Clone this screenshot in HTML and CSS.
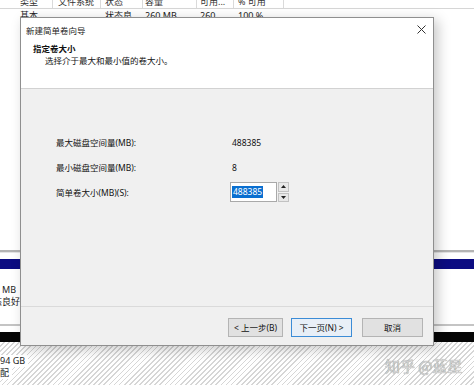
FILE: index.html
```html
<!DOCTYPE html>
<html>
<head>
<meta charset="utf-8">
<link rel="stylesheet" href="styles.css">
</head>
<body>
<div class="screen">
  <div class="thead">
    <div class="th c1"><span>类型</span></div>
    <div class="th c2"><span>文件系统</span></div>
    <div class="th c3"><span>状态</span></div>
    <div class="th c4"><span>容量</span></div>
    <div class="th c5"><span>可用...</span></div>
    <div class="th c6"><span>% 可用</span></div>
  </div>
  <div class="trow">
    <div class="td c1">基本</div>
    <div class="td c2"></div>
    <div class="td c3">状态良...</div>
    <div class="td c4">260 MB</div>
    <div class="td c5">260 ...</div>
    <div class="td c6">100 %</div>
  </div>
  <div class="filler"></div>
  <div class="disk">
    <div class="disk-line"></div>
    <div class="disk-gap"></div>
    <div class="disk-bar"></div>
    <div class="disk-info">
      <div class="info-line">MB</div>
      <div class="info-clip"><div class="info-line cut">态良好</div></div>
    </div>
    <div class="disk-line2"></div>
    <div class="disk-gap2"></div>
    <div class="disk-black"></div>
  </div>
  <div class="hatch">
    <div class="hlabel">94 GB</div>
    <div class="hlabel">配</div>
  </div>

  <div class="watermark">知乎 @蓝星</div>

  <div class="dialog">
    <div class="titlebar">
      <span class="title">新建简单卷向导</span>
      <svg class="close" width="9" height="9" viewBox="0 0 9 9"><path d="M0.5 0.5 L8.5 8.5 M8.5 0.5 L0.5 8.5" stroke="#333" stroke-width="1" fill="none"/></svg>
    </div>
    <div class="header">
      <div class="h-title">指定卷大小</div>
      <div class="h-sub">选择介于最大和最小值的卷大小。</div>
    </div>
    <div class="body">
      <div class="row">
        <div class="label">最大磁盘空间量(MB):</div>
        <div class="value">488385</div>
      </div>
      <div class="row">
        <div class="label">最小磁盘空间量(MB):</div>
        <div class="value">8</div>
      </div>
      <div class="row">
        <div class="label">简单卷大小(MB)(S):</div>
        <div class="spin">
          <div class="input"><span class="sel">488385</span></div>
          <div class="arrows">
            <div class="arrow"><svg width="5" height="3" viewBox="0 0 5 3"><path d="M0 3 L2.5 0 L5 3 Z" fill="#222"/></svg></div>
            <div class="arrow"><svg width="5" height="3" viewBox="0 0 5 3"><path d="M0 0 L2.5 3 L5 0 Z" fill="#222"/></svg></div>
          </div>
        </div>
      </div>
    </div>
    <div class="footer">
      <button class="btn back">&lt; 上一步(B)</button>
      <button class="btn next">下一页(N) &gt;</button>
      <button class="btn cancel">取消</button>
    </div>
  </div>
</div>
</body>
</html>
```

FILE: styles.css
```css
html, body {
  margin: 0;
  padding: 0;
}
body {
  width: 474px;
  height: 385px;
  overflow: hidden;
  background: #fff;
  font-family: "Noto Sans", "Noto Sans CJK SC", sans-serif;
  color: #000;
}
.screen {
  position: relative;
  width: 474px;
  height: 385px;
  display: flex;
  flex-direction: column;
  overflow: hidden;
  font-size: 9px;
}

/* table header */
.thead {
  display: flex;
  height: 8px;
  border-bottom: 1px solid #d6d6d6;
  overflow: hidden;
  background: #fff;
}
.th {
  box-sizing: border-box;
  border-right: 1px solid #dadada;
  height: 8px;
  overflow: hidden;
  color: #333;
}
.th span {
  display: block;
  line-height: 12px;
  margin-top: -4px;
  white-space: nowrap;
}
.c1 { width: 53px; padding-left: 20px; box-sizing: border-box; }
.c2 { width: 48px; padding-left: 5px; box-sizing: border-box; }
.c3 { width: 42px; padding-left: 4px; box-sizing: border-box; }
.c4 { width: 54px; padding-left: 2px; box-sizing: border-box; }
.c5 { width: 37px; padding-left: 3px; box-sizing: border-box; }
.c6 { width: 50px; padding-left: 4px; box-sizing: border-box; }

.trow {
  display: flex;
  height: 13px;
  line-height: 13px;
  color: #222;
  white-space: nowrap;
}
.td { overflow: hidden; }

.filler {
  height: 228px;
}

/* disk area */
.disk {
  display: flex;
  flex-direction: column;
}
.disk-line {
  height: 2px;
  background: #b4b4b4;
  border-bottom: 1px solid #e4e4e4;
}
.disk-gap { height: 6px; }
.disk-bar {
  height: 10px;
  background: #0c0c82;
}
.disk-info {
  height: 55px;
  padding-top: 15px;
  box-sizing: border-box;
  font-size: 9px;
  color: #222;
}
.info-line {
  line-height: 11px;
  padding-left: 2px;
  white-space: nowrap;
}
.info-clip {
  width: 20px;
  overflow: hidden;
  direction: rtl;
}
.info-line.cut {
  direction: ltr;
  display: inline-block;
  padding-left: 0;
}
.disk-line2 {
  height: 2px;
  background: #c4c4c4;
}
.disk-gap2 { height: 6px; }
.disk-black {
  height: 10px;
  background: #050505;
}

/* hatched */
.hatch {
  flex: 1;
  background: repeating-linear-gradient(135deg, #ffffff 0px, #ffffff 2.4px, #d6d6d6 2.4px, #d6d6d6 3.6px);
  padding-top: 13px;
  display: flex;
  flex-direction: column;
  align-items: flex-start;
}
.hlabel {
  background: #fff;
  line-height: 12px;
  padding: 0 3px 0 0;
  font-size: 9px;
  color: #222;
}

.watermark {
  position: absolute;
  left: 385px;
  top: 356px;
  font-family: "Noto Sans CJK SC", sans-serif;
  font-size: 15px;
  line-height: 20px;
  color: #d2d2d2;
  text-shadow: 0 0 1px #7a7a7a;
  white-space: nowrap;
}

/* dialog */
.dialog {
  position: absolute;
  left: 20px;
  top: 17px;
  width: 414px;
  height: 329px;
  box-sizing: border-box;
  border: 1px solid #8f8f8f;
  background: #f0f0f0;
  display: flex;
  flex-direction: column;
  box-shadow: 4px 3px 12px rgba(0, 0, 0, 0.22);
  font-size: 8.5px;
  color: #111;
}
.titlebar {
  height: 23px;
  background: #fff;
  display: flex;
  align-items: center;
  justify-content: space-between;
  padding: 0 7px 0 5px;
  flex-shrink: 0;
}
.title {
  font-size: 8.5px;
  color: #222;
}
.close { display: block; }

.header {
  height: 48px;
  box-sizing: border-box;
  background: #fff;
  border-bottom: 1px solid #d2d2d2;
  padding: 2px 0 0 12px;
  flex-shrink: 0;
}
.h-title {
  font-weight: bold;
  line-height: 12px;
}
.h-sub {
  line-height: 12px;
  padding-left: 12px;
}

.body {
  flex: 1;
  padding: 43px 0 0 35px;
  display: flex;
  flex-direction: column;
  gap: 5px;
}
.row {
  display: flex;
  align-items: center;
  height: 20px;
}
.label {
  width: 174px;
  flex-shrink: 0;
}
.value {
  padding-left: 2px;
}
.spin {
  display: flex;
  gap: 1px;
  height: 20px;
}
.input {
  width: 47px;
  height: 20px;
  box-sizing: border-box;
  border: 1px solid #a9a9a9;
  background: #fff;
  padding-left: 1px;
  display: flex;
  align-items: center;
}
.sel {
  background: #0a6fd0;
  color: #fff;
  line-height: 12px;
  padding: 0 1px;
}
.arrows {
  width: 11px;
  height: 20px;
  display: flex;
  flex-direction: column;
  gap: 1px;
}
.arrow {
  flex: 1;
  box-sizing: border-box;
  border: 1px solid #c2c2c2;
  background: #e8e8e8;
  display: flex;
  align-items: center;
  justify-content: center;
}
.arrow svg { display: block; }

.footer {
  height: 39px;
  box-sizing: border-box;
  border-top: 1px solid #dadada;
  display: flex;
  justify-content: flex-end;
  align-items: flex-start;
  padding: 11px 10px 0 0;
  flex-shrink: 0;
}
.btn {
  height: 19px;
  box-sizing: border-box;
  border: 1px solid #b4b4b4;
  background: #e1e1e1;
  font-family: "Noto Sans", "Noto Sans CJK SC", sans-serif;
  font-size: 8.5px;
  color: #111;
  padding: 0;
  margin: 0;
  line-height: 17px;
}
.back { width: 55px; margin-right: 8px; }
.next {
  width: 61px;
  margin-right: 10px;
  border-color: #3c8cd6;
  background: #e8eff7;
}
.cancel { width: 61px; }
```
